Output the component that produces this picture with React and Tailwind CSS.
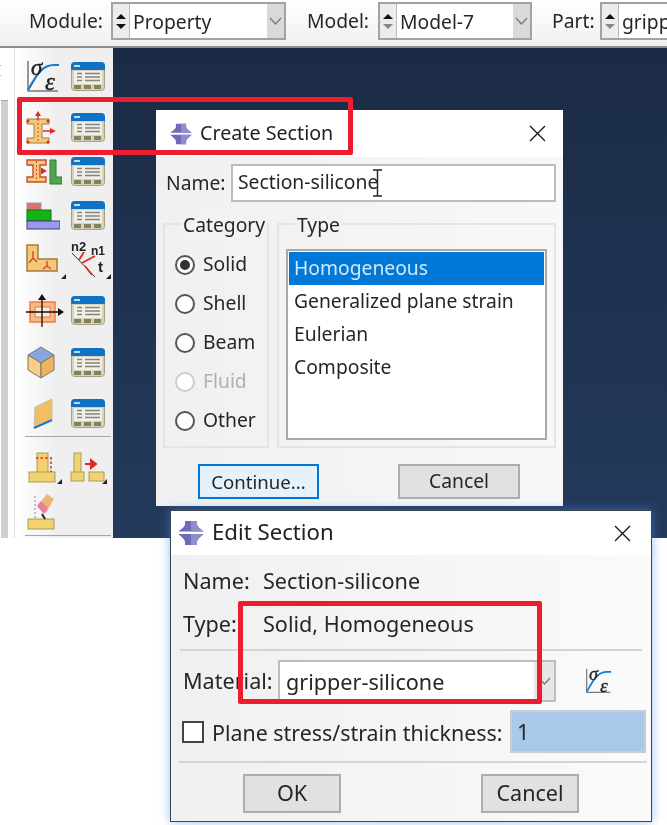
function SectionIcon({ size }) {
  return (
    <svg width={size} height={size} viewBox="0 0 26 26" className="shrink-0">
      <path d="M7 1 H19 V4 C19 7 23 9 25.5 11.5 H0.5 C3 9 7 7 7 4 Z" fill="#6f6bb8" />
      <path d="M0.5 14 H25.5 C23 17 19 19 19 22 V25 H7 V22 C7 19 3 17 0.5 14 Z" fill="#6f6bb8" />
      <path d="M13 1 H19 V4 C19 7 23 9 25.5 11.5 H13 Z M13 14 H25.5 C23 17 19 19 19 22 V25 H13 Z" fill="#908dcc" />
    </svg>
  )
}

function TableIcon() {
  return (
    <svg width="34" height="29" viewBox="0 0 34 29">
      <rect x="0.5" y="0.5" width="33" height="28" rx="3" fill="#d6d2b8" stroke="#a5a084" />
      <path d="M0 8 V4 Q0 0 4 0 H30 Q34 0 34 4 V8 Z" fill="#0f72c4" />
      <rect x="3" y="3" width="6" height="2" fill="#bcdcf5" />
      <rect x="3" y="9" width="28" height="13" fill="#f0efe8" />
      <path d="M6 11.5 H11 M6 15 H11 M6 18.5 H11 M14 11.5 H29 M14 15 H29 M14 18.5 H29" stroke="#85857c" strokeWidth="1.4" />
      <rect x="3" y="23" width="7" height="4" fill="#85805f" />
      <rect x="13" y="23" width="7" height="4" fill="#85805f" />
      <rect x="23" y="23" width="7" height="4" fill="#85805f" />
    </svg>
  )
}

function StressCurve({ small }) {
  return (
    <svg width={small ? 27 : 34} height={small ? 26 : 33} viewBox="0 0 34 33" className="overflow-visible">
      <path d="M2 1 V31 H32" fill="none" stroke="#777" strokeWidth="1.5" />
      <path d="M2 30 C9 19 14 5 28 5 H33" fill="none" stroke="#1b78c8" strokeWidth="2.2" />
      <text x="5" y="15" fontSize="23" fontStyle="italic" fontFamily="Liberation Serif, serif" fill="#222" stroke="#222" strokeWidth="0.4">σ</text>
      <text x="19" y="30" fontSize="25" fontStyle="italic" fontFamily="Liberation Serif, serif" fill="#222" stroke="#222" strokeWidth="0.4">ε</text>
    </svg>
  )
}

function BeamIcon() {
  return (
    <svg width="30" height="36" viewBox="0 0 30 36">
      <path d="M1 9 H23 V14 H16 V28 H23 V33 H1 V28 H8 V14 H1 Z" fill="#f3c978" stroke="#a47c3c" />
      <path d="M12 9 V33" stroke="#e04a2a" strokeWidth="1" strokeDasharray="2 2" />
      <path d="M12 1 L9 6 H15 Z M30 21 L24 18 V24 Z" fill="#e02a20" />
      <path d="M12 5 V10 M17 21 H25" stroke="#e02a20" strokeWidth="1.4" />
      <circle cx="2" cy="11" r="1.5" fill="#e02a20" />
      <circle cx="22" cy="11" r="1.5" fill="#e02a20" />
      <circle cx="2" cy="32" r="1.5" fill="#e02a20" />
      <circle cx="22" cy="32" r="1.5" fill="#e02a20" />
    </svg>
  )
}

function BeamLIcon() {
  return (
    <svg width="36" height="27" viewBox="0 0 36 27">
      <path d="M1 2 H20 V7 H14 V19 H20 V24 H1 V19 H7 V7 H1 Z" fill="#f3c978" stroke="#c0503a" strokeWidth="1.4" />
      <path d="M10.5 3 V24" stroke="#e04a2a" strokeDasharray="2 2" />
      <path d="M21 13 L15 9.5 V16.5 Z" fill="#e02a20" />
      <path d="M24 2 H30 V19 H36 V26 H24 Z" fill="#4fa64f" stroke="#2f7a3a" />
    </svg>
  )
}

function LayersIcon() {
  return (
    <svg width="34" height="28" viewBox="0 0 34 28">
      <rect x="1" y="1" width="14" height="7" fill="#e06f6f" stroke="#99a" />
      <rect x="1" y="8" width="24" height="11" fill="#12b312" stroke="#0a7a0a" />
      <rect x="1" y="19" width="33" height="8" fill="#9a99ef" stroke="#3c3f7a" />
    </svg>
  )
}

function Corner() {
  return <path d="M35 38 H40 V33 Z" fill="#222" />
}

function AngleIcon() {
  return (
    <svg width="40" height="38" viewBox="0 0 40 38">
      <path d="M1 4 H12 V18 H31 V30 H1 Z" fill="#f3c978" stroke="#a47c3c" strokeWidth="1.5" />
      <path d="M7 10 V17 M7 17 L3 22 M7 17 L11 21 M21 20 V25 M21 25 L17 28 M21 25 L25 28" stroke="#d8452a" strokeWidth="1.4" fill="none" />
      <Corner />
    </svg>
  )
}

function AxesIcon() {
  return (
    <svg width="40" height="38" viewBox="0 0 40 38" className="overflow-visible">
      <text x="0" y="10" fontSize="13" fontWeight="700" fontFamily="Liberation Sans, sans-serif" fill="#222">n2</text>
      <text x="20" y="14" fontSize="12" fontWeight="700" fontFamily="Liberation Sans, sans-serif" fill="#222">n1</text>
      <text x="27" y="31" fontSize="15" fontWeight="700" fontFamily="Liberation Sans, sans-serif" fill="#222">t</text>
      <path d="M1 12 L24 36" stroke="#333" strokeWidth="1" />
      <path d="M8 19 L13 11 M11 22 L24 15 M14 25 L21 34" stroke="#e02a20" strokeWidth="1.8" />
      <Corner />
    </svg>
  )
}

function CrossIcon() {
  return (
    <svg width="38" height="34" viewBox="0 0 38 34">
      <rect x="4" y="8" width="25" height="20" fill="#f6b98a" stroke="#ef7d3a" strokeWidth="1.5" />
      <rect x="9" y="13" width="15" height="10" fill="#fbe9da" stroke="#ef7d3a" />
      <path d="M0 18 H33 M16 3 V33" stroke="#111" strokeWidth="1.3" />
      <path d="M16 0 L12 6 H20 Z M38 18 L32 14 V22 Z" fill="#111" />
    </svg>
  )
}

function CubeIcon() {
  return (
    <svg width="30" height="33" viewBox="0 0 30 33">
      <path d="M15 1 L28 9 L15 17 L2 9 Z" fill="#8ba6dc" stroke="#777" />
      <path d="M2 9 L15 17 V32 L2 24 Z" fill="#f8cf85" stroke="#777" />
      <path d="M28 9 L15 17 V32 L28 24 Z" fill="#eeb55f" stroke="#777" />
    </svg>
  )
}

function ShellIcon() {
  return (
    <svg width="22" height="32" viewBox="0 0 22 32" className="ml-[6px]">
      <path d="M3 9 L20 1 V22 L2 30 Z" fill="#f2bd67" stroke="#c9c3a6" />
      <path d="M2 30 L20 22" stroke="#1b78c8" strokeWidth="2" />
    </svg>
  )
}

function StubIcon() {
  return (
    <svg width="35" height="32" viewBox="0 0 35 32">
      <rect x="9" y="1" width="11" height="20" fill="#f2d26f" stroke="#a89b58" />
      <rect x="1" y="20" width="26" height="10" fill="#f2d26f" stroke="#a89b58" />
      <path d="M8 6 H21 M23 5 V20" stroke="#e02a20" strokeWidth="1.6" strokeDasharray="2.5 2" />
      <path d="M29 32 H34 V27 Z" fill="#222" />
    </svg>
  )
}

function SplitIcon() {
  return (
    <svg width="37" height="32" viewBox="0 0 37 32">
      <rect x="4" y="1" width="7" height="20" fill="#f2d26f" stroke="#a89b58" />
      <rect x="1" y="20" width="13" height="9" fill="#f2d26f" stroke="#a89b58" />
      <rect x="19" y="20" width="15" height="9" fill="#f2d26f" stroke="#a89b58" />
      <path d="M15 12 H22 M26 12 L21 8 V16 Z" stroke="#e02a20" strokeWidth="2" fill="#e02a20" />
      <path d="M32 32 H37 V27 Z" fill="#222" />
    </svg>
  )
}

function EraseIcon() {
  return (
    <svg width="28" height="38" viewBox="0 0 28 38">
      <rect x="1" y="27" width="26" height="10" fill="#f2d26f" stroke="#a89b58" />
      <path d="M8 4 V27" stroke="#888" strokeDasharray="2 2" />
      <path d="M11 13 L20 2 L27 7 L19 21 Z" fill="#eeb47a" />
      <path d="M10 14 L14 9 L21 16 L17 22 Z" fill="#e77f9a" />
      <path d="M15 22 L18 27" stroke="#222" strokeWidth="2" />
    </svg>
  )
}

function Arrow({ up, dim }) {
  return (
    <span
      className={`w-0 h-0 border-x-[5px] border-x-transparent ${up ? 'border-b-[5px]' : 'border-t-[5px]'} ${dim ? (up ? 'border-b-[#888]' : 'border-t-[#888]') : up ? 'border-b-[#111]' : 'border-t-[#111]'}`}
    />
  )
}

function Chevron() {
  return (
    <svg width="13" height="8" viewBox="0 0 13 8">
      <path d="M1 1 L6.5 7 L12 1" fill="none" stroke="#777" strokeWidth="1.2" />
    </svg>
  )
}

function ToolSelect({ value, className, dropdown, dim }) {
  return (
    <div className={`flex h-[38px] shrink-0 border-2 border-[#a2a2a2] bg-white ${className}`}>
      <div className="w-[17px] flex flex-col items-center justify-center gap-[5px] bg-[#ececec] border-r border-[#bbb]">
        <Arrow up />
        <Arrow dim={dim} />
      </div>
      <span className="flex-1 pl-[3px] text-[#262626] text-[19.3px] leading-[35px] whitespace-nowrap">{value}</span>
      {dropdown && (
        <div className="w-[17px] flex items-center justify-center bg-[#d9d9d9]">
          <Chevron />
        </div>
      )}
    </div>
  )
}

const rows = [
  { h: 'h-[51px]', left: <StressCurve />, right: <TableIcon /> },
  { h: 'h-[44px]', left: <BeamIcon />, right: <TableIcon /> },
  { h: 'h-[44px]', left: <BeamLIcon />, right: <TableIcon /> },
  { h: 'h-[44px]', left: <LayersIcon />, right: <TableIcon /> },
  { h: 'h-[51px]', left: <AngleIcon />, right: <AxesIcon /> },
  { h: 'h-[52px]', left: <CrossIcon />, right: <TableIcon /> },
  { h: 'h-[51px]', left: <CubeIcon />, right: <TableIcon /> },
  { h: 'h-[38px]', left: <ShellIcon />, right: <TableIcon /> },
]

function Sidebar() {
  return (
    <div className="w-[113px] shrink-0 flex bg-[#f0f0f0] border-r-2 border-[#6d6f72]">
      <div className="w-[15px] shrink-0 flex flex-col bg-white border-r border-[#dcdcdc]">
        <div className="h-[11px]" />
        <div className="h-[41px] text-[#555] text-[6px] leading-[10px]">.<br />.</div>
        <div className="flex-1 ml-[1px] w-[7px] bg-[#cfcfcf] border-t border-[#aaa]" />
      </div>
      <div className="flex-1 pt-[14px] pl-[10px] pr-[6px] bg-gradient-to-r from-white to-[#efefef] to-40%">
        {rows.map((row, i) => (
          <div key={i} className={`flex items-start ${row.h}`}>
            <div className="w-[46px] h-[29px] flex items-center justify-start pl-[1px]">{row.left}</div>
            <div className="h-[29px] flex items-center">{row.right}</div>
          </div>
        ))}
        <div className="h-px bg-[#a8a8a8] mb-[15px] mt-[-1px]" />
        <div className="flex gap-[7px] items-start h-[40px] pl-[3px]">
          <StubIcon />
          <SplitIcon />
        </div>
        <div className="h-[43px] pl-[2px]">
          <EraseIcon />
        </div>
        <div className="h-px bg-[#a8a8a8]" />
      </div>
    </div>
  )
}

function CloseX() {
  return (
    <svg width="17" height="17" viewBox="0 0 17 17">
      <path d="M1 1 L16 16 M16 1 L1 16" stroke="#1c1c1c" strokeWidth="1.4" />
    </svg>
  )
}

function Radio({ label, checked, disabled }) {
  return (
    <div className="flex items-center gap-[8px] h-[39px]">
      <span className={`w-[20px] h-[20px] rounded-full bg-white border-2 flex items-center justify-center ${disabled ? 'border-[#ccc]' : 'border-[#555]'}`}>
        {checked && <span className="w-[10px] h-[10px] rounded-full bg-[#333]" />}
      </span>
      <span className={disabled ? 'text-[#b0b0b0]' : 'text-[#262626]'}>{label}</span>
    </div>
  )
}

function GroupBox({ title, className, children }) {
  return (
    <div className={`relative border-2 border-[#e4e4e4] ${className}`}>
      <span className="absolute left-[16px] top-[-13px] px-[2px] bg-[#f2f2f2] leading-[26px]">{title}</span>
      {children}
    </div>
  )
}

function CreateSection() {
  return (
    <div className="absolute left-[156px] top-[110px] w-[407px] h-[396px] flex flex-col bg-[#f3f3f3] text-[19.3px]">
      <div className="h-[47px] shrink-0 bg-white flex items-center pl-[14px] pr-[17px]">
        <SectionIcon size={22} />
        <span className="ml-[8px] mb-[2px] text-[19.7px] text-[#222] flex-1">Create Section</span>
        <CloseX />
      </div>
      <div className="flex-1 flex flex-col pl-[7px] pr-[7px] bg-gradient-to-r from-[#f0f0f0] to-[#f8f8f8]">
        <div className="flex items-center h-[38px] mt-[7px] pl-[3px]">
          <span className="w-[65px] shrink-0">Name:</span>
          <div className="flex-1 h-[38px] bg-white border-2 border-[#bcbcbc] pl-[5px] leading-[32px]">
            Section-silicone
          </div>
        </div>
        <div className="flex gap-[8px] mt-[21px] h-[225px]">
          <GroupBox title="Category" className="w-[106px]">
            <div className="pl-[10px] pt-[20px]">
              <Radio label="Solid" checked />
              <Radio label="Shell" />
              <Radio label="Beam" />
              <Radio label="Fluid" disabled />
              <Radio label="Other" />
            </div>
          </GroupBox>
          <GroupBox title="Type" className="w-[279px]">
            <div className="mx-[7px] mt-[24px] h-[191px] bg-white border-2 border-[#a8a8a8] p-[1px] flex flex-col">
              <div className="h-[33px] bg-[#0078d7] text-[#d5e8f8] leading-[31px] pl-[5px]">Homogeneous</div>
              <div className="h-[33px] leading-[31px] pl-[5px]">Generalized plane strain</div>
              <div className="h-[33px] leading-[31px] pl-[5px]">Eulerian</div>
              <div className="h-[33px] leading-[31px] pl-[5px]">Composite</div>
            </div>
          </GroupBox>
        </div>
        <div className="flex mt-[16px] pl-[35px] gap-[79px]">
          <button className="w-[121px] h-[35px] border-2 border-[#0078d7] bg-[#e5f1fb] text-[18.6px]">Continue...</button>
          <button className="w-[122px] h-[35px] border-2 border-[#adadad] bg-[#e1e1e1]">Cancel</button>
        </div>
      </div>
    </div>
  )
}

function EditSection() {
  return (
    <div className="absolute left-[170px] top-[510px] w-[482px] h-[312px] flex flex-col bg-[#f3f3f3] border border-[#3c4650] text-[21.6px] shadow-[0_0_10px_rgba(70,140,235,0.55)]">
      <div className="h-[44px] shrink-0 bg-white flex items-center pl-[7px] pr-[20px]">
        <SectionIcon size={26} />
        <span className="ml-[8px] mb-[2px] text-[22.2px] text-[#222] flex-1">Edit Section</span>
        <CloseX />
      </div>
      <div className="flex-1 flex flex-col px-[8px] bg-gradient-to-r from-[#f0f0f0] to-[#fafafa]">
        <div className="flex h-[44px] items-center pt-[6px] pl-[4px] mt-[1px]">
          <span className="w-[80px]">Name:</span>
          <span>Section-silicone</span>
        </div>
        <div className="flex h-[44px] items-center pl-[4px] pt-[4px]">
          <span className="w-[80px]">Type:</span>
          <span>Solid, Homogeneous</span>
        </div>
        <div className="h-[2px] bg-[#d4d4d4] mt-[5px] mr-[1px] ml-[1px] w-[462px]" />
        <div className="flex items-center h-[42px] mt-[9px] pl-[4px]">
          <span className="w-[95px] shrink-0">Material:</span>
          <div className="w-[278px] h-[42px] flex bg-white border-2 border-[#bdbdbd]">
            <span className="flex-1 pl-[6px] leading-[39px]">gripper-silicone</span>
            <div className="w-[20px] flex items-center justify-center bg-[#e6e6e6]"><Chevron /></div>
          </div>
          <div className="ml-[29px]"><StressCurve small /></div>
        </div>
        <div className="flex items-center h-[43px] mt-[8px] pl-[3px]">
          <span className="w-[22px] h-[22px] bg-white border-2 border-[#444] shrink-0" />
          <span className="ml-[8px] w-[298px] shrink-0 whitespace-nowrap pt-[3px] text-[21.4px]">Plane stress/strain thickness:</span>
          <div className="w-[136px] shrink-0 h-[43px] bg-[#a9c9e8] border-2 border-[#c4cfd9] pl-[5px] leading-[40px]">1</div>
        </div>
        <div className="h-[2px] bg-[#d4d4d4] mt-[8px] w-[468px] shrink-0" />
        <div className="flex mt-[11px] pl-[64px] gap-[140px]">
          <button className="w-[98px] h-[39px] border-2 border-[#adadad] bg-[#e1e1e1]">OK</button>
          <button className="w-[98px] h-[39px] border-2 border-[#adadad] bg-[#e1e1e1]">Cancel</button>
        </div>
      </div>
    </div>
  )
}

export default function App() {
  return (
    <div className="relative w-[667px] h-[825px] overflow-hidden bg-white text-[19.3px] text-[#262626] font-['Noto_Sans',sans-serif] blur-[0.4px]">
      <div className="h-[48px] flex items-center pl-[29px] pb-[4px] bg-gradient-to-b from-white to-[#f0f0f0] border-b-2 border-[#8e8e8e]">
        <span className="w-[82px] shrink-0">Module:</span>
        <ToolSelect value="Property" className="w-[175px]" dropdown />
        <span className="ml-[21px] w-[71px] shrink-0">Model:</span>
        <ToolSelect value="Model-7" className="w-[154px]" dropdown dim />
        <span className="ml-[20px] w-[48px] shrink-0">Part:</span>
        <ToolSelect value="gripp" className="w-[100px]" dim />
      </div>
      <div className="h-[490px] flex">
        <Sidebar />
        <div className="flex-1 bg-gradient-to-b from-[#1b2b45] to-[#233a5c]" />
      </div>
      <CreateSection />
      <EditSection />
      {/* I-beam pointer over the name field */}
      <svg className="absolute left-[372px] top-[169px]" width="11" height="28" viewBox="0 0 11 28">
        <path d="M1 1 H10 M5.5 1 V27 M1 27 H10" stroke="#222" strokeWidth="1.4" fill="none" />
      </svg>
      {/* red callouts */}
      <div className="absolute left-[17px] top-[97px] w-[336px] h-[58px] border-[5px] border-[#ed1c2e] rounded-[2px]" />
      <div className="absolute left-[238px] top-[601px] w-[304px] h-[103px] border-[5px] border-[#ed1c2e] rounded-[2px]" />
    </div>
  )
}
